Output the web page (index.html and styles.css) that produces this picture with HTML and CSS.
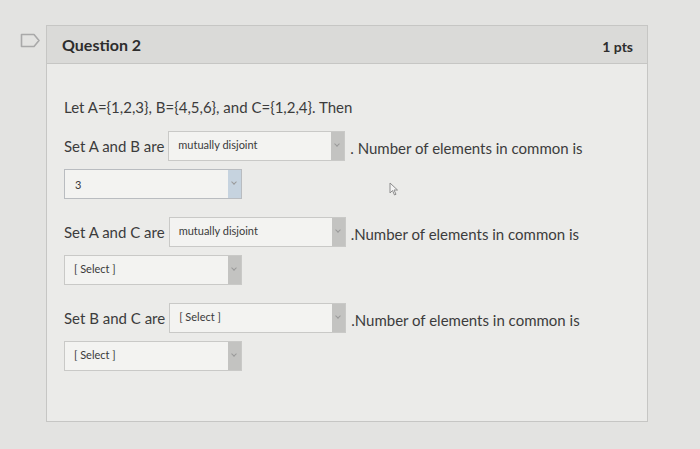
FILE: index.html
```html
<!DOCTYPE html>
<html lang="en">
<head>
    <meta charset="UTF-8">
    <title>Question 2</title>
    <link rel="stylesheet" href="styles.css">
</head>
<body>
    <div class="page">
        <div class="flag">
            <svg width="21" height="15" viewBox="0 0 21 15">
                <path d="M1.5 1.5 H14 L19 7.5 L14 13.5 H1.5 Z" fill="none" stroke="#a9a9a9" stroke-width="1.6" stroke-linejoin="round"/>
            </svg>
        </div>

        <div class="question">
            <div class="question-header">
                <span class="title">Question 2</span>
                <span class="points">1 pts</span>
            </div>

            <div class="question-body">
                <p class="intro">Let A={1,2,3}, B={4,5,6}, and C={1,2,4}. Then</p>

                <div class="row">
                    <span>Set A and B are</span>
                    <div class="dropdown wide"><span>mutually disjoint</span><i class="arrow"></i></div>
                    <span class="after">. Number of elements in common is</span>
                </div>
                <div class="dropdown count focused"><span class="num">3</span><i class="arrow"></i></div>

                <div class="row">
                    <span>Set A and C are</span>
                    <div class="dropdown wide"><span>mutually disjoint</span><i class="arrow"></i></div>
                    <span class="after">.Number of elements in common is</span>
                </div>
                <div class="dropdown count"><span>[ Select ]</span><i class="arrow"></i></div>

                <div class="row">
                    <span>Set B and C are</span>
                    <div class="dropdown wide"><span>[ Select ]</span><i class="arrow"></i></div>
                    <span class="after">.Number of elements in common is</span>
                </div>
                <div class="dropdown count"><span>[ Select ]</span><i class="arrow"></i></div>
            </div>
        </div>

        <svg class="cursor" width="10" height="14" viewBox="0 0 10 14">
            <path d="M1 1 L1 11 L3.5 8.5 L5.5 13 L7 12.3 L5 8 L8.5 8 Z" fill="#f4f4f4" stroke="#8c8c8c" stroke-width="1"/>
        </svg>
    </div>
</body>
</html>
```

FILE: styles.css
```css
body {
    margin: 0;
    background-color: #e3e3e1;
    font-family: Lato, "Open Sans", sans-serif;
    color: #3c3c3c;
}
.page {
    position: relative;
    display: flex;
    align-items: flex-start;
    padding: 25px 0 0 20px;
    height: 424px;
}
.flag {
    width: 26px;
    padding-top: 7px;
}
.question {
    width: 600px;
    border: 1px solid #c6c6c4;
    background-color: #ebebe9;
}
.question-header {
    display: flex;
    justify-content: space-between;
    align-items: center;
    height: 37px;
    padding: 0 14px 0 15px;
    background-color: #dadad8;
    border-bottom: 1px solid #c6c6c4;
    font-weight: bold;
}
.title {
    font-size: 16px;
    color: #2d2d2d;
}
.points {
    font-size: 14px;
    color: #2d2d2d;
    padding-top: 4px;
}
.question-body {
    padding: 33px 18px 32px 17px;
    font-size: 15px;
}
.intro {
    margin: 0 0 14px;
    line-height: 20px;
}
.row {
    display: flex;
    align-items: center;
    gap: 4px;
    margin-bottom: 8px;
}
.row .after {
    margin-left: 1px;
    padding-top: 4px;
}
.dropdown {
    display: flex;
    justify-content: space-between;
    height: 30px;
    box-sizing: border-box;
    border: 1px solid #c9c9c7;
    background-color: #f3f3f1;
    font-size: 11px;
    color: #3a3a3a;
}
.dropdown span {
    padding: 6px 0 0 9px;
}
.dropdown.wide {
    width: 177px;
}
.dropdown.count {
    width: 178px;
    margin-bottom: 18px;
}
.dropdown .num {
    padding-left: 10px;
    padding-top: 8px;
}
.arrow {
    position: relative;
    width: 13px;
    background-color: #c3c3c1;
}
.arrow::after {
    content: "";
    position: absolute;
    left: 4px;
    top: 10px;
    width: 3px;
    height: 3px;
    border-right: 1px solid #9a9a9a;
    border-bottom: 1px solid #9a9a9a;
    transform: rotate(45deg);
}
.focused {
    border-color: #b9bcc0;
}
.focused .arrow {
    background-color: #c6d3df;
}
.cursor {
    position: absolute;
    left: 389px;
    top: 182px;
}
```
